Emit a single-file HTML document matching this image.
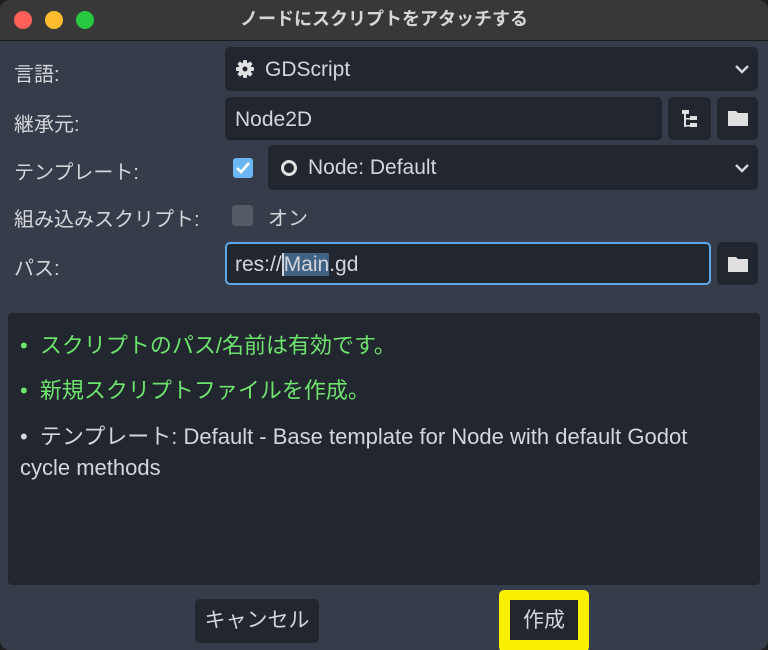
<!DOCTYPE html>
<html><head><meta charset="utf-8"><style>
*{margin:0;padding:0;box-sizing:border-box}
body{width:768px;height:650px;background:#1e1e1e;font-family:"Liberation Sans","Noto Sans CJK JP",sans-serif;overflow:hidden;position:relative}
.win{position:absolute;left:0;top:0;width:768px;height:650px;background:#363d4a;border-radius:10px;overflow:hidden}
.title{position:absolute;left:0;top:0;width:768px;height:41px;background:#383838;border-bottom:1px solid #1a1a1a;color:#d6d6d6;font-size:18px;font-weight:bold;text-align:center;line-height:38px}
.dot{position:absolute;top:11px;width:18px;height:18px;border-radius:50%}
.a{position:absolute}
.lbl{position:absolute;left:14px;color:#d4d6da;font-size:20px}
.f{position:absolute;background:#21262f;border-radius:5px;color:#d4d6da;font-size:21px;line-height:46px;padding-left:10px}
.chev{position:absolute;right:8px;top:0;color:#d4d6da}
.t{position:absolute;left:20px;font-size:22px}
</style></head><body>
<div class="win">
<div class="title">ノードにスクリプトをアタッチする</div>
<div class="dot" style="left:14px;background:#fe5f57"></div>
<div class="dot" style="left:45px;background:#febc2e"></div>
<div class="dot" style="left:76px;background:#28c840"></div>

<div class="lbl" style="top:58px">言語:</div>
<div class="f" style="left:225px;top:47px;width:533px;height:44px;padding-left:40px">GDScript
<svg class="a" style="left:10px;top:12px" width="20" height="20" viewBox="0 0 20 20"><g fill="#e0e0e0"><circle cx="10" cy="10" r="6.5"/><rect x="8" y="1" width="4" height="18" rx="1"/><rect x="1" y="8" width="18" height="4" rx="1"/><rect x="8" y="1" width="4" height="18" rx="1" transform="rotate(45 10 10)"/><rect x="8" y="1" width="4" height="18" rx="1" transform="rotate(-45 10 10)"/></g><circle cx="10" cy="10" r="2.5" fill="#21262f"/></svg>
<svg class="chev" style="top:16px" width="16" height="12" viewBox="0 0 16 12"><path d="M2 3l6 6 6-6" stroke="#d4d6da" stroke-width="2.4" fill="none"/></svg></div>

<div class="lbl" style="top:108px">継承元:</div>
<div class="f" style="left:225px;top:97px;width:437px;height:43px;border-bottom:2px solid #1a1e25">Node2D</div>
<div class="f" style="left:668px;top:97px;width:43px;height:43px;padding:0"><svg class="a" style="left:12px;top:12px" width="20" height="20" viewBox="0 0 20 20"><g fill="#e0e0e0"><rect x="2" y="1" width="7" height="4"/><rect x="4" y="5" width="2" height="13"/><rect x="6" y="9" width="4" height="1.5"/><rect x="6" y="16" width="4" height="1.5"/><rect x="10" y="7" width="7" height="4"/><rect x="10" y="14" width="7" height="4"/></g></svg></div>
<div class="f" style="left:717px;top:97px;width:41px;height:43px;padding:0"><svg class="a" style="left:11px;top:13px" width="20" height="16" viewBox="0 0 20 16"><path d="M0 1h8l2 2h10v13H0z" fill="#e0e0e0"/></svg></div>

<div class="lbl" style="top:156px">テンプレート:</div>
<div class="a" style="left:233px;top:158px;width:20px;height:20px;background:#6bb7f5;border-radius:3px"><svg width="20" height="20"><path d="M4 10l4 4 8-9" stroke="#fff" stroke-width="2.6" fill="none"/></svg></div>
<div class="f" style="left:268px;top:145px;width:490px;height:45px;padding-left:40px;line-height:46px">Node: Default
<svg class="a" style="left:12px;top:14px" width="18" height="18"><circle cx="9" cy="9" r="6.5" stroke="#e0e0e0" stroke-width="3" fill="none"/></svg>
<svg class="chev" style="top:17px" width="16" height="12" viewBox="0 0 16 12"><path d="M2 3l6 6 6-6" stroke="#d4d6da" stroke-width="2.4" fill="none"/></svg></div>

<div class="lbl" style="top:203px">組み込みスクリプト:</div>
<div class="a" style="left:232px;top:205px;width:21px;height:21px;background:#555b66;border-radius:3px"></div>
<div class="a" style="left:268px;top:202px;color:#d4d6da;font-size:20px">オン</div>

<div class="lbl" style="top:252px">パス:</div>
<div class="f" style="left:225px;top:242px;width:486px;height:43px;border:2px solid #5fa8e8;line-height:41px;padding-left:8px">res://<span style="background:#3f6385;border-left:2px solid #d4d6da">Main</span>.gd</div>
<div class="f" style="left:717px;top:242px;width:41px;height:43px;padding:0"><svg class="a" style="left:11px;top:14px" width="20" height="16" viewBox="0 0 20 16"><path d="M0 1h8l2 2h10v13H0z" fill="#e0e0e0"/></svg></div>

<div class="a" style="left:8px;top:313px;width:752px;height:272px;background:#21262f;border-radius:4px">
<div class="t" style="top:15px;left:12px;color:#6de36d">•&nbsp; スクリプトのパス/名前は有効です。</div>
<div class="t" style="top:60px;left:12px;color:#6de36d">•&nbsp; 新規スクリプトファイルを作成。</div>
<div class="t" style="top:108px;left:12px;color:#d4d6da;line-height:31px;white-space:nowrap">•&nbsp; テンプレート: Default - Base template for Node with default Godot<br>cycle methods</div>
</div>

<div class="a" style="left:195px;top:599px;width:124px;height:44px;background:#21262f;border-radius:5px;color:#d4d6da;font-size:21px;line-height:44px;text-align:center">キャンセル</div>
<div class="a" style="left:499px;top:590px;width:90px;height:62px;background:#f8f000;border-radius:5px"></div>
<div class="a" style="left:510px;top:600px;width:68px;height:40px;background:#21262f;color:#d4d6da;font-size:21px;line-height:42px;text-align:center">作成</div>
</div>
</body></html>
